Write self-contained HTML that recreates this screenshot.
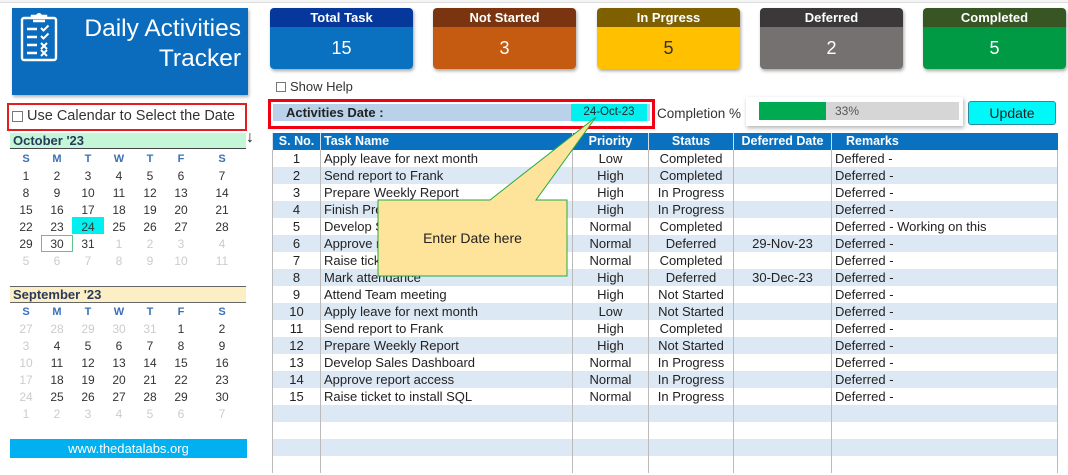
<!DOCTYPE html>
<html><head><meta charset="utf-8"><style>
*{margin:0;padding:0;box-sizing:border-box}
body{width:1068px;height:475px;background:#fff;position:relative;overflow:hidden;font-family:"Liberation Sans",sans-serif;color:#222}
.a{position:absolute}
.card{position:absolute;top:8px;width:143px;height:61px;border-radius:4px;box-shadow:1px 2px 3px rgba(0,0,0,.35);overflow:hidden}
.card .h{height:19px;color:#fff;font-weight:bold;font-size:13px;text-align:center;line-height:19px}
.card .v{height:42px;font-size:18px;text-align:center;line-height:42px;color:#fff}
.cal{position:absolute;font-size:12px}
.cal span{position:absolute;width:24px;text-align:center}
table{position:absolute;left:272px;top:133px;border-collapse:collapse;table-layout:fixed;font-size:13px}
td,th{height:17px;padding:0;line-height:17px;white-space:nowrap;overflow:hidden}
th{background:#0a70c0;color:#fff;font-weight:bold;font-size:12.5px;border-left:1px solid #cfe0f0;height:16px}
td{border-left:1px solid #bbb}
#tb tr:nth-child(even) td{background:#dce8f4}
.c{text-align:center}
.l{padding-left:3px}
</style></head><body>
<div class="a" style="left:0;top:0;width:1068px;height:3px;border-bottom:1px solid #ddd;background:#f4f4f4"></div>
<div class="a" style="left:12px;top:8px;width:236px;height:87px;background:#0b6bbd;box-shadow:1px 2px 3px rgba(0,0,0,.3)"></div>
<svg class="a" style="left:19px;top:13px" width="40" height="50" viewBox="0 0 40 50" fill="none" stroke="#fff" stroke-width="2.4">
<rect x="3" y="5" width="34" height="42" rx="2"/><path d="M13 5 v-2 h14 v2 M14 8 h12" /><circle cx="20" cy="3" r="1.8" fill="#fff"/>
<path d="M8 16 h10 M8 24 h10 M8 32 h10 M8 40 h10"/>
<path d="M22 15 l2.5 2.5 l5 -5 M22 23 l2.5 2.5 l5 -5 M22 30 l6 6 M28 30 l-6 6 M22 37 l6 6 M28 37 l-6 6" stroke-width="2"/>
</svg>
<div class="a" style="left:70px;top:14px;width:171px;text-align:right;color:#fff;font-size:24.5px;line-height:30px">Daily Activities<br>Tracker</div>
<div class="a" style="left:7px;top:103px;width:240px;height:28px;border:2px solid #e02020"></div>
<div class="a" style="left:12px;top:111px;width:11px;height:11px;border:1px solid #777"></div>
<div class="a" style="left:27px;top:108px;font-size:14.5px;color:#333">Use Calendar to Select the Date</div>
<div class="a" style="left:10px;top:133px;width:236px;height:16px;background:#c3f7d8;border-bottom:1px solid #444;font-weight:bold;font-size:13px;color:#2a3a5a;padding-left:3px;line-height:16px">October '23</div>
<div class="a" style="left:246px;top:129px;font-size:16px">↓</div>
<div class="a" style="left:10px;top:286px;width:236px;height:17px;background:#fdefc5;border-top:1px solid #666;border-bottom:1px solid #666;font-weight:bold;font-size:13px;color:#2a3a5a;padding-left:3px;line-height:15px">September '23</div>
<div class="a" style="left:10px;top:439px;width:237px;height:19px;background:#00b0f0;color:#fff;font-size:13px;text-align:center;line-height:19px">www.thedatalabs.org</div>
<div class="a" style="left:41px;top:235px;width:32px;height:17px;border:1px solid #5bc88a"></div>
<div class="a" style="left:72px;top:217px;width:32px;height:17px;background:#00f0f0"></div>
<div id="cals"></div>

<div class="card" style="left:270px"><div class="h" style="background:#05389a">Total Task</div><div class="v" style="background:#0a70c0">15</div></div>
<div class="card" style="left:433px"><div class="h" style="background:#7a3410">Not Started</div><div class="v" style="background:#c55a11">3</div></div>
<div class="card" style="left:597px"><div class="h" style="background:#7f6000">In Prgress</div><div class="v" style="background:#ffc000;color:#333">5</div></div>
<div class="card" style="left:760px"><div class="h" style="background:#3a3838">Deferred</div><div class="v" style="background:#767171">2</div></div>
<div class="card" style="left:923px"><div class="h" style="background:#375623">Completed</div><div class="v" style="background:#009a45">5</div></div>

<div class="a" style="left:276px;top:82px;width:10px;height:10px;border:1px solid #777"></div>
<div class="a" style="left:290px;top:79px;font-size:13px;color:#333">Show Help</div>
<div class="a" style="left:268px;top:99px;width:387px;height:30px;border:3px solid #f00010"></div>
<div class="a" style="left:273px;top:104px;width:377px;height:17px;background:#b9d2ea"></div>
<div class="a" style="left:571px;top:104px;width:76px;height:17px;background:#00f0f0;font-size:11.5px;text-align:center;line-height:17px">24-Oct-23</div>
<div class="a" style="left:286px;top:104px;font-size:13px;font-weight:bold;line-height:17px">Activities Date :</div>
<div class="a" style="left:657px;top:106px;font-size:13.5px;color:#333">Completion %</div>
<div class="a" style="left:746px;top:97px;width:217px;height:29px;background:#fff;box-shadow:1px 2px 4px rgba(0,0,0,.3)"></div>
<div class="a" style="left:759px;top:102px;width:200px;height:18px;background:#d6d6d6"></div>
<div class="a" style="left:759px;top:102px;width:67px;height:18px;background:#00aa50"></div>
<div class="a" style="left:835px;top:104px;font-size:12px;color:#555">33%</div>
<div class="a" style="left:968px;top:101px;width:88px;height:24px;background:#00f8f8;border:1px solid #2a8aa0;border-radius:3px;font-size:14px;text-align:center;line-height:22px;color:#222">Update</div>

<table>
<colgroup><col style="width:48px"><col style="width:252px"><col style="width:76px"><col style="width:85px"><col style="width:98px"><col style="width:226px"></colgroup>
<thead><tr><th>S. No.</th><th style="text-align:left;padding-left:3px">Task Name</th><th>Priority</th><th>Status</th><th>Deferred Date</th><th style="text-align:left;padding-left:14px">Remarks</th></tr></thead>
<tbody id="tb"></tbody>
</table>
<svg class="a" style="left:0;top:0" width="1068" height="475"><path d="M596 117 L536 200 H567 V276 H378 V200 H490 Z" fill="#fde49a" stroke="#22aa44" stroke-width="1"/></svg>
<div class="a" style="left:378px;top:230px;width:189px;text-align:center;font-size:14px;color:#222">Enter Date here</div>
<script>
var d=[["Apply leave for next month","Low","Completed","","Deffered -"],["Send report to Frank","High","Completed","","Deferred -"],["Prepare Weekly Report","High","In Progress","","Deferred -"],["Finish Presentation","High","In Progress","","Deferred -"],["Develop Sales Dashboard","Normal","Completed","","Deferred - Working on this"],["Approve report access","Normal","Deferred","29-Nov-23","Deferred -"],["Raise ticket to install SQL","Normal","Completed","","Deferred -"],["Mark attendance","High","Deferred","30-Dec-23","Deferred -"],["Attend Team meeting","High","Not Started","","Deferred -"],["Apply leave for next month","Low","Not Started","","Deferred -"],["Send report to Frank","High","Completed","","Deferred -"],["Prepare Weekly Report","High","Not Started","","Deferred -"],["Develop Sales Dashboard","Normal","In Progress","","Deferred -"],["Approve report access","Normal","In Progress","","Deferred -"],["Raise ticket to install SQL","Normal","In Progress","","Deferred -"]];
var h="";for(var i=0;i<19;i++){var r=d[i]||["","","","",""];h+='<tr><td class="c">'+(d[i]?i+1:"")+'</td><td class="l">'+r[0]+'</td><td class="c">'+r[1]+'</td><td class="c">'+r[2]+'</td><td class="c">'+r[3]+'</td><td class="l" style="border-right:1px solid #bbb">'+r[4]+'</td></tr>';}
document.getElementById("tb").innerHTML=h;
var xs=[14,45,76,107,138,169,210];
function cal(top,rows,gray){var s="";var hd="SMTWTFS";for(var j=0;j<7;j++)s+='<span style="left:'+xs[j]+'px;top:'+top+'px;color:#3a70b8;font-weight:bold;font-size:11px">'+hd[j]+'</span>';
rows.forEach(function(r,ri){r.forEach(function(v,j){s+='<span style="left:'+xs[j]+'px;top:'+(top+16+ri*17)+'px;color:'+(gray(ri,j,v)?'#ccc':'#333')+'">'+v+'</span>'})});return s;}
var oct=[[1,2,3,4,5,6,7],[8,9,10,11,12,13,14],[15,16,17,18,19,20,21],[22,23,24,25,26,27,28],[29,30,31,1,2,3,4],[5,6,7,8,9,10,11]];
var sep=[[27,28,29,30,31,1,2],[3,4,5,6,7,8,9],[10,11,12,13,14,15,16],[17,18,19,20,21,22,23],[24,25,26,27,28,29,30],[1,2,3,4,5,6,7]];
var c=document.getElementById("cals");
c.innerHTML='<div class="cal">'+cal(153,oct,function(r,j){return (r==4&&j>2)||r==5})+cal(306,sep,function(r,j){return (r==0&&j<5)||r==5||(j==0&&r>0)})+'</div>';
</script>
</body></html>
